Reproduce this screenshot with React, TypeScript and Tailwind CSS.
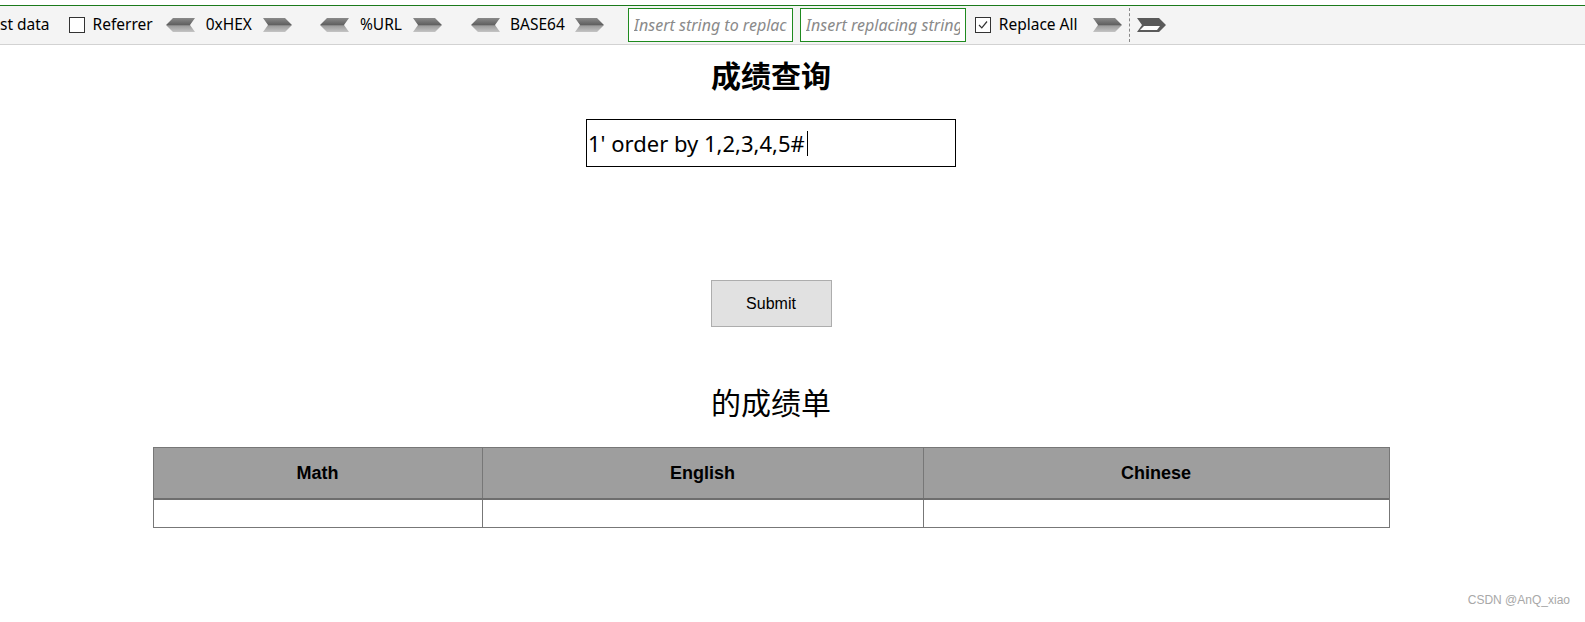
import type { ReactNode } from 'react';

const ui = { fontFamily: '"Noto Sans", "Open Sans", sans-serif' };
const cjk = { fontFamily: '"Noto Sans CJK SC", "Noto Sans", sans-serif' };
const arial = { fontFamily: '"Liberation Sans", Arial, sans-serif' };

function LeftArrow() {
  return (
    <svg width="29" height="14" viewBox="0 0 29 14" className="shrink-0">
      <defs>
        <linearGradient id="lg" x1="0" y1="0" x2="0" y2="1">
          <stop offset="0" stopColor="#8a8a8a" />
          <stop offset="0.5" stopColor="#5e5e5e" />
          <stop offset="0.55" stopColor="#9a9a9a" />
          <stop offset="1" stopColor="#c4c4c4" />
        </linearGradient>
      </defs>
      <polygon points="0,7 7,0 29,0 24,7 29,14 7,14" fill="url(#lg)" />
    </svg>
  );
}

function RightArrow({ hollow = false }: { hollow?: boolean }) {
  return (
    <svg width="29" height="14" viewBox="0 0 29 14" className="shrink-0">
      <defs>
        <linearGradient id="rg" x1="0" y1="0" x2="0" y2="1">
          <stop offset="0" stopColor="#8a8a8a" />
          <stop offset="0.5" stopColor="#5e5e5e" />
          <stop offset="0.55" stopColor="#9a9a9a" />
          <stop offset="1" stopColor="#c4c4c4" />
        </linearGradient>
      </defs>
      {hollow ? (
        <>
          <polygon points="0,0 22,0 29,7 22,14 0,14 5,7" fill="#5a5a5a" />
          <polygon points="7,8 23,8 20,12 3,12" fill="#ffffff" />
        </>
      ) : (
        <polygon points="0,0 22,0 29,7 22,14 0,14 5,7" fill="url(#rg)" />
      )}
    </svg>
  );
}

function Check({ checked = false }: { checked?: boolean }) {
  return (
    <span className="flex h-[16px] w-[16px] shrink-0 items-center justify-center border border-[#333] bg-white">
      {checked && (
        <svg width="12" height="12" viewBox="0 0 12 12">
          <path d="M2 6 L4.8 8.8 L10 2.5" fill="none" stroke="#333" strokeWidth="1.2" />
        </svg>
      )}
    </span>
  );
}

function Coder({ label, gap }: { label: string; gap: string }) {
  return (
    <div className={`flex items-center ${gap}`}>
      <LeftArrow />
      <span>{label}</span>
      <RightArrow />
    </div>
  );
}

function Cell({ children, w, head = false }: { children?: ReactNode; w: string; head?: boolean }) {
  return (
    <div
      className={`${w} flex items-center justify-center border-r border-[#777] last:border-r-0 ${
        head ? 'h-[50px] text-[18px] font-bold text-black' : 'h-[27px]'
      }`}
    >
      {children}
    </div>
  );
}

export default function App() {
  return (
    <div className="relative h-screen w-full overflow-hidden bg-white">
      <div className="h-[5px] bg-white" />
      <div
        className="flex h-[40px] items-center border-t border-t-[#1b7a1b] border-b border-b-[#d2d2d2] bg-[#f4f4f4] text-[15.5px] text-black"
        style={ui}
      >
        <span>st data</span>
        <div className="ml-[19px] flex items-center gap-[8px]">
          <Check />
          <span>Referrer</span>
        </div>
        <div className="ml-[13px]">
          <Coder label="0xHEX" gap="gap-[11px]" />
        </div>
        <div className="ml-[28px]">
          <Coder label="%URL" gap="gap-[11px]" />
        </div>
        <div className="ml-[29px]">
          <Coder label="BASE64" gap="gap-[10px]" />
        </div>
        <input
          readOnly
          placeholder="Insert string to replace"
          className="ml-[24px] h-[34px] w-[165px] border border-[#1f8a1f] bg-white px-[5px] text-[16px] italic outline-none placeholder:text-[#8a8a8a]"
          style={ui}
        />
        <input
          readOnly
          placeholder="Insert replacing string"
          className="ml-[7px] h-[34px] w-[166px] border border-[#1f8a1f] bg-white px-[5px] text-[16px] italic outline-none placeholder:text-[#8a8a8a]"
          style={ui}
        />
        <div className="ml-[9px] flex items-center gap-[8px]">
          <Check checked />
          <span>Replace All</span>
        </div>
        <div className="ml-[15px]">
          <RightArrow />
        </div>
        <div className="ml-[7px] h-[34px] border-l border-dashed border-[#888]" />
        <div className="ml-[7px]">
          <RightArrow hollow />
        </div>
      </div>

      <div className="flex w-[1542px] flex-col items-center">
        <h2 className="mt-[8px] text-[30px] font-bold leading-[42px] text-black" style={cjk}>
          成绩查询
        </h2>
        <div
          className="mt-[24px] flex h-[48px] w-[370px] items-center border border-black bg-white pl-[1px] text-[22px] text-black"
          style={ui}
        >
          1' order by 1,2,3,4,5#
          <span className="ml-[2px] inline-block h-[25px] w-px bg-black" />
        </div>
        <button
          className="mt-[113px] h-[47px] w-[121px] border border-[#adadad] bg-[#e1e1e1] text-[16px] text-black"
          style={arial}
        >
          Submit
        </button>
        <h3 className="mt-[53px] text-[30px] font-normal leading-[42px] text-black" style={cjk}>
          的成绩单
        </h3>
        <div className="mt-[25px] w-[1237px] border border-[#777]" style={arial}>
          <div className="flex border-b-2 border-[#6e6e6e] bg-[#9e9e9e]">
            <Cell w="w-[329px]" head>Math</Cell>
            <Cell w="w-[441px]" head>English</Cell>
            <Cell w="flex-1" head>Chinese</Cell>
          </div>
          <div className="flex bg-white">
            <Cell w="w-[329px]" />
            <Cell w="w-[441px]" />
            <Cell w="flex-1" />
          </div>
        </div>
      </div>

      <div className="absolute right-[15px] top-[591px] text-[12px] text-[#a8a8a8]" style={arial}>
        CSDN @AnQ_xiao
      </div>
    </div>
  );
}
